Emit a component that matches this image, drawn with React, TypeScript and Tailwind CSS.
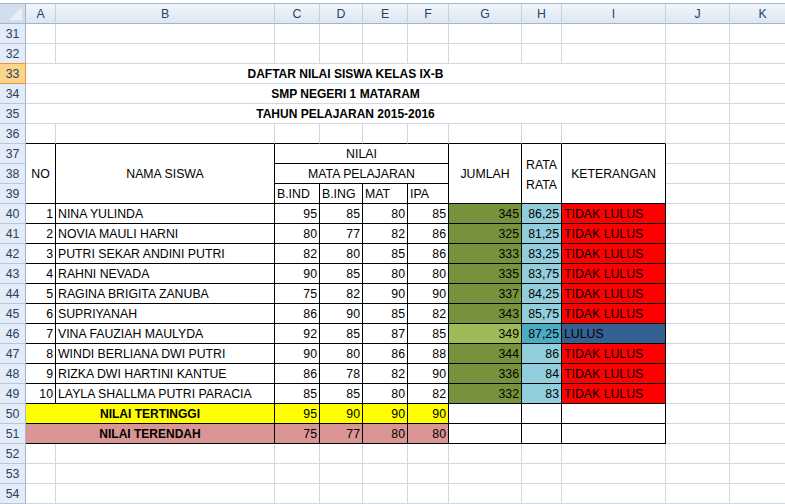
import type { ReactNode } from "react";

const GRID_R = "border-r-[#d0d7e5]";
const GRID_B = "border-b-[#d0d7e5]";
const BLACK_R = "border-r-black";
const BLACK_B = "border-b-black";

const W = {
  a: "w-[30px]",
  b: "w-[219px]",
  c: "w-[45px]",
  d: "w-[43px]",
  e: "w-[45px]",
  f: "w-[41px]",
  g: "w-[73px]",
  h: "w-[40px]",
  i: "w-[104px]",
  j: "w-[64px]",
  k: "w-[66px]",
};

const columns = [
  { letter: "A", w: W.a },
  { letter: "B", w: W.b },
  { letter: "C", w: W.c },
  { letter: "D", w: W.d },
  { letter: "E", w: W.e },
  { letter: "F", w: W.f },
  { letter: "G", w: W.g },
  { letter: "H", w: W.h },
  { letter: "I", w: W.i },
  { letter: "J", w: W.j },
  { letter: "K", w: W.k },
];

const students = [
  { no: 1, name: "NINA YULINDA", nilai: [95, 85, 80, 85], jumlah: 345, rata: "86,25", lulus: false },
  { no: 2, name: "NOVIA MAULI HARNI", nilai: [80, 77, 82, 86], jumlah: 325, rata: "81,25", lulus: false },
  { no: 3, name: "PUTRI SEKAR ANDINI PUTRI", nilai: [82, 80, 85, 86], jumlah: 333, rata: "83,25", lulus: false },
  { no: 4, name: "RAHNI NEVADA", nilai: [90, 85, 80, 80], jumlah: 335, rata: "83,75", lulus: false },
  { no: 5, name: "RAGINA BRIGITA ZANUBA", nilai: [75, 82, 90, 90], jumlah: 337, rata: "84,25", lulus: false },
  { no: 6, name: "SUPRIYANAH", nilai: [86, 90, 85, 82], jumlah: 343, rata: "85,75", lulus: false },
  { no: 7, name: "VINA FAUZIAH MAULYDA", nilai: [92, 85, 87, 85], jumlah: 349, rata: "87,25", lulus: true },
  { no: 8, name: "WINDI BERLIANA DWI PUTRI", nilai: [90, 80, 86, 88], jumlah: 344, rata: "86", lulus: false },
  { no: 9, name: "RIZKA DWI HARTINI KANTUE", nilai: [86, 78, 82, 90], jumlah: 336, rata: "84", lulus: false },
  { no: 10, name: "LAYLA SHALLMA PUTRI PARACIA", nilai: [85, 85, 80, 82], jumlah: 332, rata: "83", lulus: false },
];

const subjectW = [W.c, W.d, W.e, W.f];

function Cell({
  w,
  r = GRID_R,
  b = GRID_B,
  className = "",
  children,
}: {
  w: string;
  r?: string;
  b?: string;
  className?: string;
  children?: ReactNode;
}) {
  return (
    <div
      className={`flex h-[20px] shrink-0 items-center overflow-hidden whitespace-nowrap border-r border-b pt-[2px] ${w} ${r} ${b} ${className}`}
    >
      {children}
    </div>
  );
}

function RowHead({ n, active = false, beforeActive = false }: { n: number; active?: boolean; beforeActive?: boolean }) {
  const look = active
    ? "bg-[#fbd48c] border-r-[#f29436] border-b-[#f29436]"
    : `bg-[#e4ecf7] border-r-[#9eb6ce] ${beforeActive ? "border-b-[#f29436]" : "border-b-[#b7c8dd]"}`;
  return (
    <div
      className={`flex h-[20px] w-[26px] shrink-0 items-center justify-center border-r border-b pt-[2px] text-[#27415f] ${look}`}
    >
      {n}
    </div>
  );
}

function EmptyRow({ n, beforeActive = false }: { n: number; beforeActive?: boolean }) {
  return (
    <div className="flex h-[20px]">
      <RowHead n={n} beforeActive={beforeActive} />
      {columns.map((c) => (
        <Cell key={c.letter} w={c.w} />
      ))}
    </div>
  );
}

function TitleRow({ n, text, active = false }: { n: number; text: string; active?: boolean }) {
  return (
    <div className="flex h-[20px]">
      <RowHead n={n} active={active} />
      <Cell w="w-[640px]" className="justify-center text-[12px] font-bold">
        {text}
      </Cell>
      <Cell w={W.j} />
      <Cell w={W.k} />
    </div>
  );
}

function Tall({ w, children, className = "" }: { w: string; children: ReactNode; className?: string }) {
  return (
    <div
      className={`flex h-[60px] shrink-0 items-center justify-center border-r border-b border-black pt-[2px] text-center ${w} ${className}`}
    >
      {children}
    </div>
  );
}

function StudentRow({ s }: { s: (typeof students)[number] }) {
  return (
    <div className="flex h-[20px]">
      <RowHead n={39 + s.no} />
      <Cell w={W.a} r={BLACK_R} b={BLACK_B} className="justify-end pr-[2px]">
        {s.no}
      </Cell>
      <Cell w={W.b} r={BLACK_R} b={BLACK_B} className="pl-[2px]">
        {s.name}
      </Cell>
      {s.nilai.map((v, i) => (
        <Cell key={i} w={subjectW[i]} r={BLACK_R} b={BLACK_B} className="justify-end pr-[2px]">
          {v}
        </Cell>
      ))}
      <Cell
        w={W.g}
        r={BLACK_R}
        b={BLACK_B}
        className={`justify-end pr-[2px] ${s.lulus ? "bg-[#9bbb59]" : "bg-[#76933c]"}`}
      >
        {s.jumlah}
      </Cell>
      <Cell
        w={W.h}
        r={BLACK_R}
        b={BLACK_B}
        className={`justify-end pr-[2px] ${s.lulus ? "bg-[#4bacc6]" : "bg-[#92cddc]"}`}
      >
        {s.rata}
      </Cell>
      <Cell
        w={W.i}
        r={BLACK_R}
        b={BLACK_B}
        className={`pl-[2px] ${s.lulus ? "bg-[#366092]" : "bg-[#ff0000]"}`}
      >
        {s.lulus ? "LULUS" : "TIDAK LULUS"}
      </Cell>
      <Cell w={W.j} />
      <Cell w={W.k} />
    </div>
  );
}

function SummaryRow({ n, label, values, bg }: { n: number; label: string; values: number[]; bg: string }) {
  return (
    <div className="flex h-[20px]">
      <RowHead n={n} />
      <Cell w="w-[249px]" r={BLACK_R} b={BLACK_B} className={`justify-center text-[12px] font-bold ${bg}`}>
        {label}
      </Cell>
      {values.map((v, i) => (
        <Cell key={i} w={subjectW[i]} r={BLACK_R} b={BLACK_B} className={`justify-end pr-[2px] ${bg}`}>
          {v}
        </Cell>
      ))}
      <Cell w={W.g} r={BLACK_R} b={BLACK_B} />
      <Cell w={W.h} r={BLACK_R} b={BLACK_B} />
      <Cell w={W.i} r={BLACK_R} b={BLACK_B} />
      <Cell w={W.j} />
      <Cell w={W.k} />
    </div>
  );
}

export default function App() {
  return (
    <div className="h-[504px] w-[785px] overflow-hidden bg-white font-['Liberation_Sans',Arial,sans-serif] text-[12.3px] leading-[19px] text-black">
      <div className="h-[4px] border-b border-[#9eb6ce] bg-white" />

      {/* column letters */}
      <div className="flex h-[20px]">
        <div className="relative h-[20px] w-[26px] shrink-0 border-r border-b border-[#9eb6ce] bg-[#d2deee]">
          <svg className="absolute top-0 left-0" width="25" height="19" viewBox="0 0 25 19">
            <polygon points="22,3 22,16 9,16" fill="#eaf0f8" />
          </svg>
        </div>
        {columns.map((c) => (
          <div
            key={c.letter}
            className={`flex h-[20px] shrink-0 items-center justify-center border-r border-b border-r-[#c3d1e3] border-b-[#9eb6ce] bg-linear-to-b from-[#f2f6fb] to-[#dde6f2] pt-[2px] text-[#27415f] ${c.w}`}
          >
            {c.letter}
          </div>
        ))}
      </div>

      <EmptyRow n={31} />
      <EmptyRow n={32} beforeActive />
      <TitleRow n={33} text="DAFTAR NILAI SISWA KELAS IX-B" active />
      <TitleRow n={34} text="SMP NEGERI 1 MATARAM" />
      <TitleRow n={35} text="TAHUN PELAJARAN 2015-2016" />

      {/* row 36: top edge of the table */}
      <div className="flex h-[20px]">
        <RowHead n={36} />
        {columns.map((c, i) => (
          <Cell key={c.letter} w={c.w} b={i < 9 ? BLACK_B : GRID_B} />
        ))}
      </div>

      {/* rows 37-39: table heading */}
      <div className="flex h-[60px]">
        <div className="flex flex-col">
          <RowHead n={37} />
          <RowHead n={38} />
          <RowHead n={39} />
        </div>
        <Tall w={W.a}>NO</Tall>
        <Tall w={W.b}>NAMA SISWA</Tall>
        <div className="flex w-[174px] shrink-0 flex-col">
          <Cell w="w-[174px]" r={BLACK_R} b={BLACK_B} className="justify-center">
            NILAI
          </Cell>
          <Cell w="w-[174px]" r={BLACK_R} b={BLACK_B} className="justify-center">
            MATA PELAJARAN
          </Cell>
          <div className="flex">
            {["B.IND", "B.ING", "MAT", "IPA"].map((t, i) => (
              <Cell key={t} w={subjectW[i]} r={BLACK_R} b={BLACK_B} className="pl-[2px]">
                {t}
              </Cell>
            ))}
          </div>
        </div>
        <Tall w={W.g}>JUMLAH</Tall>
        <Tall w={W.h} className="flex-col leading-[20px]">
          <span>RATA</span>
          <span>RATA</span>
        </Tall>
        <Tall w={W.i}>KETERANGAN</Tall>
        <div className="flex flex-col">
          <Cell w={W.j} />
          <Cell w={W.j} />
          <Cell w={W.j} />
        </div>
        <div className="flex flex-col">
          <Cell w={W.k} />
          <Cell w={W.k} />
          <Cell w={W.k} />
        </div>
      </div>

      {students.map((s) => (
        <StudentRow key={s.no} s={s} />
      ))}

      <SummaryRow n={50} label="NILAI TERTINGGI" values={[95, 90, 90, 90]} bg="bg-[#ffff00]" />
      <SummaryRow n={51} label="NILAI TERENDAH" values={[75, 77, 80, 80]} bg="bg-[#da9694]" />

      <EmptyRow n={52} />
      <EmptyRow n={53} />
      <EmptyRow n={54} />
    </div>
  );
}
